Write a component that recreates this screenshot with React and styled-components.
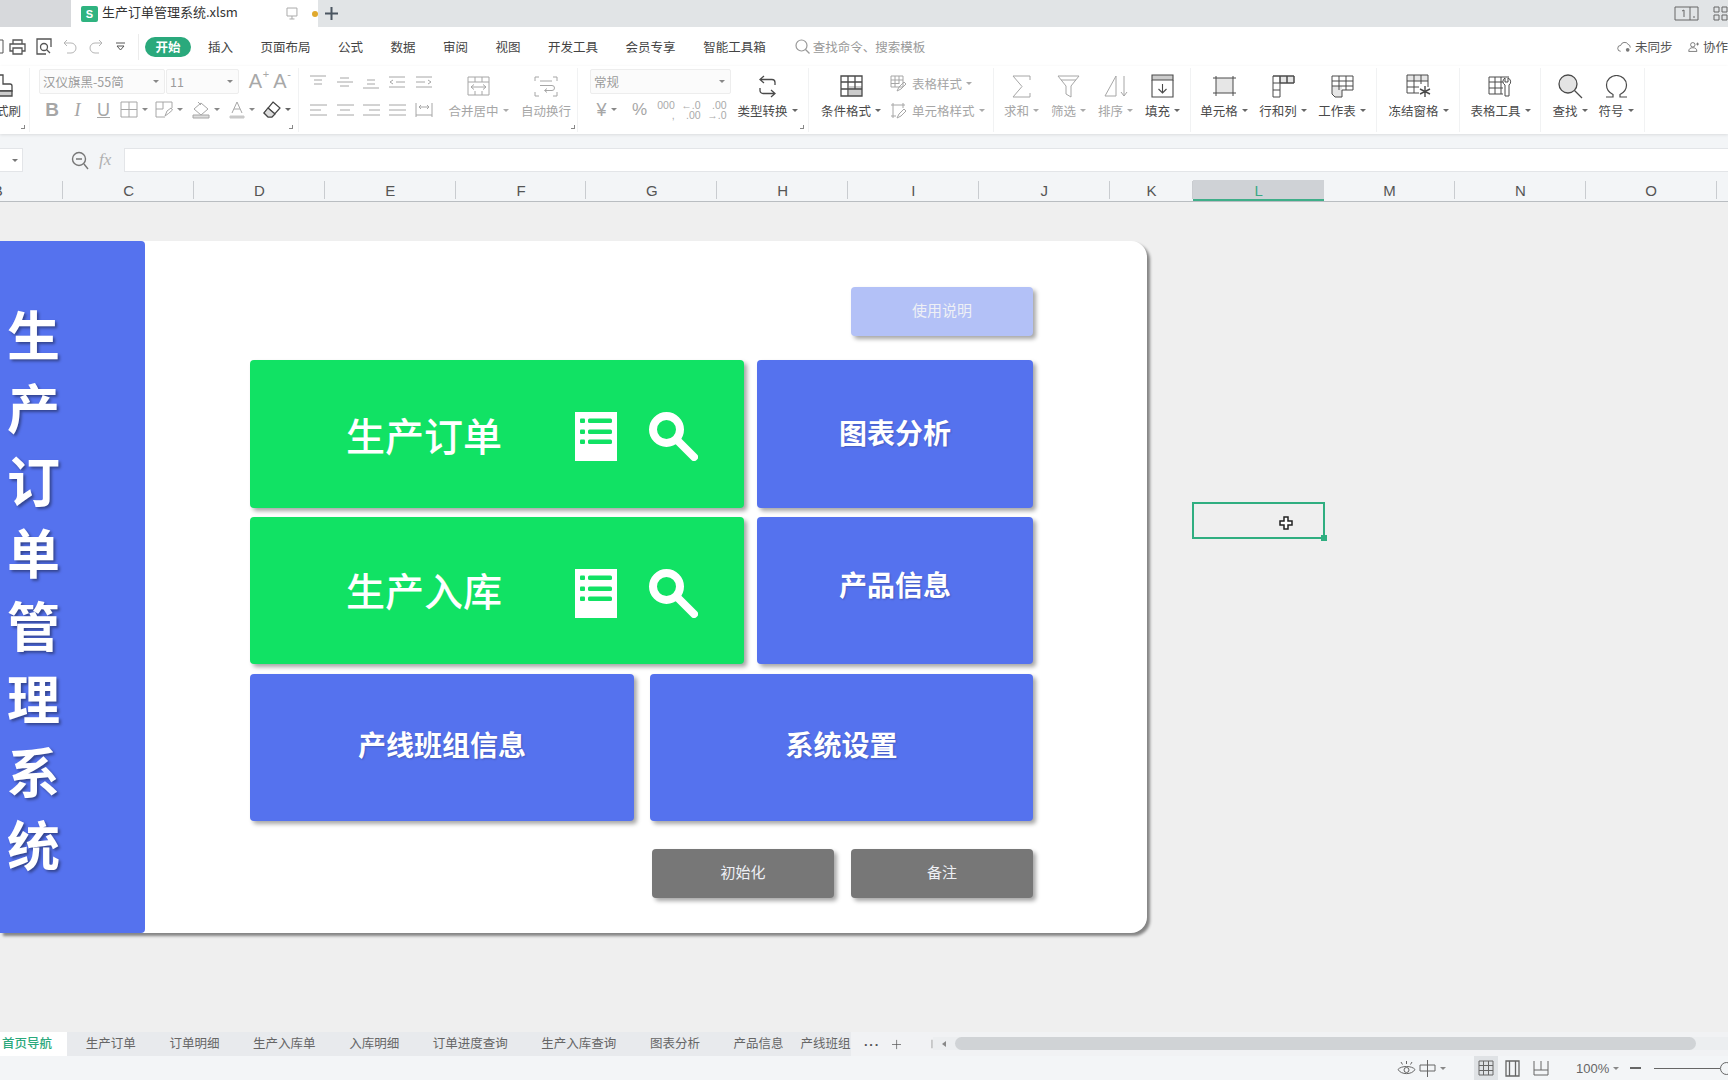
import React from "react";
import styled, { createGlobalStyle } from "styled-components";

const GlobalStyle = createGlobalStyle`
  html, body { margin: 0; padding: 0; background: #efefef; }
  #root { width: 1728px; height: 1080px; overflow: hidden; }
  * { box-sizing: border-box; }
  body { font-family: "Noto Sans CJK SC", "Noto Sans", sans-serif; }
`;

const Page = styled.div`
  display: flex;
  flex-direction: column;
  width: 1728px;
  height: 1080px;
  overflow: hidden;
`;

/* title bar */
const TitleBar = styled.div`
  flex: 0 0 27px;
  display: flex;
  align-items: stretch;
  background: #e1e4e6;
`;
const OtherTab = styled.div`
  width: 71px;
  background: #d7d9dc;
`;
const FileTab = styled.div`
  width: 247px;
  background: #fff;
  display: flex;
  align-items: center;
  padding-left: 10px;
  font-size: 13px;
  color: #333;
`;
const FileBadge = styled.span`
  width: 17px;
  height: 16px;
  margin-right: 4px;
  background: #2fb380;
  color: #fff;
  font: 700 11px "Liberation Sans", sans-serif;
  display: flex;
  align-items: center;
  justify-content: center;
  border-radius: 2px;
`;
const FileName = styled.span`
  width: 185px;
  margin-bottom: 4px;
  white-space: nowrap;
`;
const Dot = styled.i`
  width: 6px;
  height: 6px;
  margin-left: 14px;
  border-radius: 50%;
  background: #e0a92e;
  flex: none;
`;
const NewTab = styled.div`
  width: 45px;
  padding-left: 7px;
  display: flex;
  align-items: center;
  color: #4a5560;
`;
const WinIcons = styled.div`
  margin-left: auto;
  width: 54px;
  display: flex;
  align-items: center;
  gap: 14px;
  color: #666;
`;

/* menu row */
const MenuRow = styled.div`
  flex: 0 0 39px;
  display: flex;
  align-items: center;
  background: #fff;
  font-size: 12.5px;
  color: #444;
`;
const QuickBar = styled.div`
  width: 139px;
  height: 26px;
  margin-right: 6px;
  display: flex;
  align-items: center;
  border-right: 1px solid #ececec;
`;
const QuickSlot = styled.span`
  width: ${(p) => p.$w}px;
  display: flex;
  justify-content: center;
  color: ${(p) => (p.$dim ? "#b5b5b5" : "#555")};
`;
const StartPill = styled.div`
  width: 46px;
  height: 20px;
  margin-right: 17px;
  border-radius: 10px;
  background: #2aa97c;
  color: #fff;
  font-weight: 700;
  display: flex;
  align-items: center;
  justify-content: center;
`;
const MenuItems = styled.div`
  display: flex;
  gap: 27.5px;
`;
const SearchHint = styled.div`
  margin-left: 29px;
  display: flex;
  align-items: center;
  gap: 3px;
  color: #999;
`;
const RightLinks = styled.div`
  margin-left: auto;
  width: 111px;
  display: flex;
  align-items: center;
  gap: 4px;
  white-space: nowrap;
  overflow: hidden;
  color: #555;
`;
const LinkGap = styled.span`
  width: 10px;
`;

/* ribbon */
const Ribbon = styled.div`
  flex: 0 0 68px;
  display: flex;
  background: #fff;
  box-shadow: 0 1px 3px rgba(0, 0, 0, 0.1);
  position: relative;
  z-index: 1;
  font-size: 12.5px;
  color: #a2a2a2;
`;
const Group = styled.div`
  position: relative;
  flex: 0 0 ${(p) => p.$w}px;
  display: flex;
  padding-left: ${(p) => p.$pl || 0}px;
  &::after {
    content: "";
    position: absolute;
    right: 0;
    top: 2px;
    bottom: 2px;
    width: 1px;
    background: #f1f2f3;
  }
`;
const Corner = styled.i`
  position: absolute;
  right: ${(p) => p.$r}px;
  bottom: 5px;
  width: 4px;
  height: 4px;
  border-right: 1px solid #888;
  border-bottom: 1px solid #888;
`;
const Tool = styled.div`
  flex: 0 0 ${(p) => p.$w}px;
  margin-left: ${(p) => p.$ml || 0}px;
  padding-top: 8px;
  display: flex;
  flex-direction: column;
  align-items: center;
  color: ${(p) => (p.$dark ? "#4a4a4a" : "#a6a6a6")};
`;
const ToolIcon = styled.div`
  height: 24px;
  display: flex;
  align-items: center;
  justify-content: center;
`;
const ToolLabel = styled.div`
  height: 24px;
  display: flex;
  align-items: center;
  white-space: nowrap;
`;
const Caret = styled.i`
  width: 0;
  height: 0;
  margin-left: 4px;
  border: 3px solid transparent;
  border-top: 3px solid ${(p) => p.$c || "#888"};
  border-bottom: 0;
  flex: none;
`;
const Stack = styled.div`
  flex: 0 0 ${(p) => p.$w}px;
  padding-top: 3px;
  display: flex;
  flex-direction: column;
  gap: 3px;
`;
const Row = styled.div`
  height: 25px;
  display: flex;
  align-items: center;
`;
const Select = styled.div`
  width: ${(p) => p.$w}px;
  height: 25px;
  margin-right: 1px;
  padding: 0 5px 0 3px;
  background: #fbfbfb;
  border: 1px solid #ededed;
  border-radius: 2px;
  display: flex;
  align-items: center;
  justify-content: space-between;
  white-space: nowrap;
  color: #9c9c9c;
`;
const Slot = styled.div`
  flex: 0 0 ${(p) => p.$w}px;
  display: flex;
  align-items: center;
  justify-content: center;
  color: ${(p) => (p.$dark ? "#444" : "#a6a6a6")};
`;
const StyleGlyph = styled.span`
  font: ${(p) => p.$font};
  text-decoration: ${(p) => (p.$u ? "underline" : "none")};
  line-height: 1;
`;
const GrowA = styled.span`
  font: 400 20px "Liberation Sans", sans-serif;
  position: relative;
  color: #a8a8a8;
  & > sup {
    position: absolute;
    left: 14px;
    top: -2px;
    font-size: 11px;
  }
`;
const Decimal = styled.span`
  display: flex;
  flex-direction: column;
  align-items: flex-end;
  font: 400 10.5px/10px "Liberation Sans", sans-serif;
  color: #aaa;
`;
const SmallLine = styled.div`
  height: 24px;
  display: flex;
  align-items: center;
  gap: 6px;
  white-space: nowrap;
  color: #a6a6a6;
`;
const SmallStack = styled.div`
  padding-top: 5px;
  display: flex;
  flex-direction: column;
  gap: 3px;
`;

/* formula bar + column header */
const FormulaBar = styled.div`
  flex: 0 0 38px;
  padding-top: 14px;
  display: flex;
  background: #f3f5f7;
`;
const NameBox = styled.div`
  width: 23px;
  background: #fff;
  border: 1px solid #e3e5e8;
  border-left: 0;
  padding-right: 4px;
  display: flex;
  align-items: center;
  justify-content: flex-end;
`;
const FxIcons = styled.div`
  width: 101px;
  padding-left: 48px;
  display: flex;
  align-items: center;
  gap: 10px;
  color: #777;
`;
const Fx = styled.span`
  font: italic 400 17px "Liberation Serif", serif;
  color: #b0b0b0;
`;
const FormulaInput = styled.div`
  flex: 1;
  background: #fff;
  border: 1px solid #e3e5e8;
  border-right: 0;
`;
const ColumnHeader = styled.div`
  flex: 0 0 30px;
  display: flex;
  margin-left: -67.6px;
  width: 1900px;
  background: #f3f5f7;
  border-bottom: 1px solid #b9bdc1;
`;
const ColCell = styled.div`
  flex: 0 0 ${(p) => p.$w}px;
  margin-top: 8px;
  padding-top: 2px;
  display: flex;
  align-items: center;
  justify-content: center;
  font: 400 15px "Liberation Sans", sans-serif;
  color: ${(p) => (p.$on ? "#3aa985" : "#555")};
  background: ${(p) =>
    p.$on ? "#cfd2d6" : "linear-gradient(#c9ccd0, #c9ccd0) right bottom / 1px 18px no-repeat"};
  border-bottom: 2px solid ${(p) => (p.$on ? "#3fae89" : "transparent")};
`;

/* sheet */
const Sheet = styled.div`
  flex: 1;
  position: relative;
  padding-top: 39px;
  background: #efefef;
`;
const Panel = styled.div`
  width: 1147px;
  height: 692px;
  display: flex;
  background: #fff;
  border-radius: 0 16px 16px 0;
  box-shadow: 3px 3px 3px rgba(0, 0, 0, 0.45);
`;
const Sidebar = styled.div`
  flex: 0 0 145px;
  padding: 56px 0 0 7px;
  background: #5572ee;
  border-radius: 0 4px 4px 0;
  display: flex;
  flex-direction: column;
  color: #fff;
  font-size: 53px;
  font-weight: 700;
  line-height: 72.8px;
  text-shadow: 2px 2px 3px rgba(0, 0, 0, 0.4);
`;
const Board = styled.div`
  flex: 0 0 783px;
  margin-left: 105px;
  padding-top: 46px;
  display: flex;
  flex-direction: column;
  color: #fff;
`;
const BoardRow = styled.div`
  display: flex;
  justify-content: ${(p) => (p.$end ? "flex-end" : "flex-start")};
  gap: ${(p) => p.$gap || 0}px;
  margin-bottom: ${(p) => p.$mb || 0}px;
`;
const Tile = styled.div`
  flex: 0 0 ${(p) => p.$w}px;
  height: ${(p) => p.$h || 147}px;
  padding-bottom: ${(p) => p.$up || 0}px;
  border-radius: 4px;
  background: ${(p) => (p.$green ? "#11e264" : "#5572ee")};
  box-shadow: 3px 3px 4px rgba(0, 0, 0, 0.35);
  display: flex;
  align-items: center;
  justify-content: center;
  font-size: 28px;
  font-weight: 700;
  text-shadow: 1px 1px 2px rgba(0, 0, 0, 0.2);
`;
const GreenTile = styled(Tile)`
  justify-content: flex-start;
  padding-left: 96px;
  padding-top: 5px;
  font-size: 39px;
  font-weight: 500;
  text-shadow: none;
`;
const GreenLabel = styled.span`
  width: 229px;
  margin-bottom: ${(p) => p.$up}px;
`;
const SearchGlyph = styled.svg`
  margin-left: 32px;
`;
const SmallButton = styled.div`
  flex: 0 0 182px;
  height: 49px;
  padding-bottom: 4px;
  border-radius: 4px;
  background: ${(p) => (p.$light ? "#b3c1f7" : "#777")};
  color: #eef0f5;
  box-shadow: 3px 3px 4px rgba(0, 0, 0, 0.35);
  display: flex;
  align-items: center;
  justify-content: center;
  font-size: 15px;
`;
const SelectedCell = styled.div`
  position: absolute;
  left: 1192px;
  top: 300px;
  width: 133px;
  height: 37px;
  border: 2.5px solid #2fae80;
  &::after {
    content: "";
    position: absolute;
    right: -4px;
    bottom: -4px;
    width: 6px;
    height: 6px;
    background: #2fae80;
  }
`;
const CellCursor = styled.svg`
  position: absolute;
  left: 1279px;
  top: 314px;
`;

/* sheet tabs */
const TabsBar = styled.div`
  flex: 0 0 24px;
  display: flex;
  align-items: stretch;
  background: #f1f2f4;
  font-size: 12.5px;
  color: #666;
`;
const TabStrip = styled.div`
  width: 851px;
  display: flex;
  align-items: center;
  overflow: hidden;
  background: #e8eaed;
  white-space: nowrap;
`;
const HomeTab = styled.div`
  flex: 0 0 67px;
  height: 100%;
  padding: 0 0 4px 2px;
  background: #fff;
  color: #2aa97c;
  font-weight: 500;
  display: flex;
  align-items: center;
`;
const SheetTab = styled.div`
  flex: none;
  padding: 0 ${(p) => (p.$tight ? 0 : 16.8)}px;
  margin-left: ${(p) => (p.$first ? 2 : 0)}px;
  margin-bottom: 4px;
`;
const TabTools = styled.div`
  width: 82px;
  padding-left: 13px;
  display: flex;
  align-items: center;
  gap: 12px;
  color: #555;
`;
const More = styled.span`
  font: 700 13px "Liberation Sans", sans-serif;
  letter-spacing: 1px;
`;
const ToolGap = styled.span`
  width: 8px;
`;
const ScrollArea = styled.div`
  flex: 1;
  margin: 5px 0 6px;
  display: flex;
  align-items: center;
  background: #eceef0;
`;
const ScrollArrow = styled.div`
  width: 22px;
  display: flex;
  justify-content: center;
  &::before {
    content: "";
    border: 3px solid transparent;
    border-right: 4px solid #888;
    border-left: 0;
  }
`;
const ScrollThumb = styled.div`
  width: 741px;
  height: 13px;
  border-radius: 7px;
  background: #d0d3d6;
`;

/* status bar */
const StatusBar = styled.div`
  flex: 0 0 24px;
  padding-left: 1396px;
  display: flex;
  align-items: center;
  background: #f3f5f7;
  font: 400 13px "Liberation Sans", sans-serif;
  color: #666;
`;
const StatusSlot = styled.div`
  flex: 0 0 ${(p) => p.$w}px;
  height: 100%;
  display: flex;
  align-items: center;
  justify-content: center;
  background: ${(p) => (p.$on ? "#dfe2e5" : "transparent")};
`;
const SliderLine = styled.div`
  flex: 0 0 66px;
  height: 1px;
  margin-left: 2px;
  background: #666;
`;
const SliderKnob = styled.div`
  flex: none;
  width: 13px;
  height: 13px;
  border: 1px solid #666;
  border-radius: 50%;
`;

const Ico = ({ w, h, sw = 1, children }) => (
  <svg width={w} height={h} viewBox={`0 0 ${w} ${h}`} fill="none" stroke="currentColor" strokeWidth={sw}>
    {children}
  </svg>
);

const alignRows = [
  ["M1 2h16", "M5 6h8", "M5 10h8"],
  ["M4 4h9", "M1 8h16", "M4 12h9"],
  ["M5 6h8", "M5 10h8", "M1 14h16"],
  ["M1 3h16", "M8 8h9", "M1 13h16", "M5 6L2 8l3 2"],
  ["M1 3h16", "M1 8h9", "M1 13h16", "M13 6l3 2-3 2"],
  ["M1 3h17", "M1 8h11", "M1 13h17"],
  ["M1 3h17", "M4 8h10", "M1 13h17"],
  ["M1 3h17", "M7 8h11", "M1 13h17"],
  ["M1 3h17", "M1 8h17", "M1 13h17"],
  ["M1 1v14", "M17 1v14", "M1 13h16", "M4 5h10", "M6 3L4 5l2 2", "M12 3l2 2-2 2"],
];
const AlignIcon = ({ i }) => (
  <Ico w={18} h={16}>
    {alignRows[i].map((d) => (
      <path key={d} d={d} />
    ))}
  </Ico>
);

const BrushIcon = () => (
  <Ico w={22} h={24} sw={1.3}>
    <path d="M7 1h5v9h7a2 2 0 0 1 2 2v5H1v-5a2 2 0 0 1 2-2h4z" />
    <path d="M1 17h20v5H1z" fill="#ccc" />
  </Ico>
);
const MergeIcon = () => (
  <Ico w={23} h={20}>
    <path d="M1 1h21v18H1z M1 6h21 M8 1v5 M15 1v5 M8 15v4 M15 15v4 M4 11h15 M7 8.5L4 11l3 2.5 M16 8.5l3 2.5-3 2.5" />
  </Ico>
);
const WrapIcon = () => (
  <Ico w={24} h={21}>
    <path d="M1 5V1h4 M19 1h4v4 M1 16v4h4 M19 20h4v-4 M6 5h12 M6 9.5h12a2.5 2.5 0 0 1 0 5h-7 M13 12.5l-2.5 2 2.5 2" />
  </Ico>
);
const SwapIcon = () => (
  <Ico w={19} h={23} sw={1.3}>
    <path d="M6 1L2 4.5 6 8 M2 4.5h12a3 3 0 0 1 3 3V10 M13 15l4 3.5-4 3.5 M17 18.5H5a3 3 0 0 1-3-3V13" />
  </Ico>
);
const CondIcon = () => (
  <Ico w={23} h={22} sw={1.3}>
    <path d="M9 11h13v10H9z" fill="#ccc" stroke="none" />
    <path d="M1 1h21v20H1z M1 7h21 M1 14h21 M8 1v20 M15 1v13" />
  </Ico>
);
const TableStyleIcon = () => (
  <Ico w={16} h={17}>
    <path d="M1 1h12v11H1z M1 5h12 M1 8.5h8 M5 1v11 M9 1v8 M7 16l2-4 5-5 2 2-5 5z" />
  </Ico>
);
const CellStyleIcon = () => (
  <Ico w={16} h={17}>
    <path d="M3 1v15 M13 1v5 M1 3h14 M1 14h5 M7 16l2-4 5-5 2 2-5 5z" />
  </Ico>
);
const SumIcon = () => (
  <Ico w={19} h={23}>
    <path d="M18 5V1H1l9 10.5L1 22h17v-4" />
  </Ico>
);
const FilterIcon = () => (
  <Ico w={23} h={23}>
    <path d="M1 1h21l-8 10v11l-5-3v-8z M4 5h15" />
  </Ico>
);
const SortIcon = () => (
  <Ico w={24} h={23}>
    <path d="M1 21L12 1v20z M20 1v20 M17 17l3 4 3-4" />
  </Ico>
);
const FillIcon = () => (
  <Ico w={23} h={24} sw={1.1}>
    <path d="M1 1h21v5H1z" fill="#ccc" />
    <path d="M1 6v17h21V6 M11.5 10v9 M7.5 15l4 4 4-4" />
  </Ico>
);
const CellIcon = () => (
  <Ico w={25} h={22}>
    <path d="M4 3h17v15H4z" fill="#e6e6e6" stroke="none" />
    <path d="M4 1v20 M21 1v20 M1 3h23 M1 18h23" />
  </Ico>
);
const RowColIcon = () => (
  <Ico w={24} h={23}>
    <path d="M16 1h7v7h-7z M9 1h7v7H9z" fill="#e6e6e6" />
    <path d="M2 1h7v21H2z M2 8h7 M2 15h7 M2 1h21v7H9" />
  </Ico>
);
const SheetIcon = () => (
  <Ico w={24} h={23}>
    <path d="M2 11h10v11H5l-3-3z" fill="#e6e6e6" stroke="none" />
    <path d="M2 1h21v14H12v7H5l-3-3z M2 6h21 M2 11h21 M9 1v14 M16 1v14" />
  </Ico>
);
const FreezeIcon = () => (
  <Ico w={25} h={24}>
    <path d="M1 1h21v6H1z" fill="#e6e6e6" stroke="none" />
    <path d="M13 19H1V1h21v12 M1 7h21 M1 13h12 M8 1v18 M15 1v9" />
    <path d="M19 12v11 M14 15l10 5 M14 20l10-5" strokeWidth="1.4" />
  </Ico>
);
const ToolsIcon = () => (
  <Ico w={25} h={24}>
    <path d="M15 20H1V3h20 M1 8h14 M1 14h14 M7 3v17 M13 3v17" />
    <path d="M17 4v4h3V4a4 4 0 0 1 1 7v11h-4V11a4 4 0 0 1 0-7z" />
  </Ico>
);
const FindIcon = () => (
  <Ico w={25} h={25} sw={1.3}>
    <circle cx="10" cy="10" r="9" fill="#e4e4e4" />
    <path d="M16.5 16.5L24 24" />
  </Ico>
);
const OmegaIcon = () => (
  <Ico w={23} h={23} sw={1.2}>
    <path d="M1 22h7v-2.5C4 17.5 1.5 14 1.5 10a10 9.5 0 0 1 20 0c0 4-2.5 7.5-6.5 9.5V22h7" />
  </Ico>
);
const BorderIcon = () => (
  <Ico w={18} h={17}>
    <path d="M1 1h16v15H1z M9 1v15 M1 8.5h16" />
  </Ico>
);
const ShadeIcon = () => (
  <Ico w={18} h={17}>
    <path d="M1 1h16v6 M1 1v15h9 M1 8h7 M8 1v7 M10 15l2-5 4-3 1.5 2-4 3.5z" />
  </Ico>
);
const PaintIcon = () => (
  <Ico w={18} h={18}>
    <path d="M9 2l7 6-7 6-7-6z M6 1l3 3" />
    <path d="M1 14h16v3H1z" fill="#ddd" />
  </Ico>
);
const FontColorIcon = () => (
  <Ico w={16} h={18}>
    <path d="M3 12L8 1l5 11 M5 8h6" />
    <path d="M1 15h14v2H1z" fill="currentColor" opacity="0.6" />
  </Ico>
);
const EraserIcon = () => (
  <Ico w={18} h={17} sw={1.2}>
    <path d="M10 1l7 6-8 9H5l-4-4z M5 7l7 6" />
    <path d="M1 12l4-5 7 6-3 3H5z" fill="#ddd" />
  </Ico>
);
const DocIcon = () => (
  <svg width="42" height="49" viewBox="0 0 42 49">
    <path d="M0 0h42v49H0z" fill="#fff" />
    {[9, 20, 30].map((y) => (
      <g key={y} fill="#11e264">
        <rect x="5" y={y - 2.5} width="5" height="4.5" rx="1" />
        <rect x="13" y={y - 2.5} width="24" height="4.5" rx="1.5" />
      </g>
    ))}
  </svg>
);
const LensIcon = () => (
  <SearchGlyph width="49" height="49" viewBox="0 0 49 49" fill="none" stroke="#fff" strokeWidth="8">
    <circle cx="17.5" cy="17.5" r="13.5" />
    <path d="M29 29l16 16" strokeLinecap="round" />
  </SearchGlyph>
);

const menus = ["插入", "页面布局", "公式", "数据", "审阅", "视图", "开发工具", "会员专享", "智能工具箱"];
const columns = ["B", "C", "D", "E", "F", "G", "H", "I", "J", "K", "L", "M", "N", "O", "P"];
const sheets = ["订单明细", "生产入库单", "入库明细", "订单进度查询", "生产入库查询", "图表分析", "产品信息"];
const title = "生产订单管理系统".split("");

const Labeled = ({ text, dark }) => (
  <ToolLabel>
    {text}
    <Caret $c={dark ? "#666" : "#aaa"} />
  </ToolLabel>
);

const BigTool = ({ w, text, dark, ml, icon, plain }) => (
  <Tool $w={w} $dark={dark} $ml={ml}>
    <ToolIcon>{icon}</ToolIcon>
    {plain ? <ToolLabel>{text}</ToolLabel> : <Labeled text={text} dark={dark} />}
  </Tool>
);

export default function App() {
  return (
    <Page>
      <GlobalStyle />
      <TitleBar>
        <OtherTab />
        <FileTab>
          <FileBadge>S</FileBadge>
          <FileName>生产订单管理系统.xlsm</FileName>
          <Ico w={12} h={13}>
            <path d="M1 1h10v8H1z M6 9v3 M3.5 12h5" stroke="#aaa" />
          </Ico>
          <Dot />
        </FileTab>
        <NewTab>
          <Ico w={13} h={13} sw={2}>
            <path d="M6.5 0v13 M0 6.5h13" />
          </Ico>
        </NewTab>
        <WinIcons>
          <Ico w={25} h={15}>
            <path d="M1 1h23v13H1z M16 1v13 M8 5l2-1v7 M19 11h2" />
          </Ico>
          <Ico w={15} h={15}>
            <path d="M1 1h5v5H1z M9 1h5v5H9z M1 9h5v5H1z M9 9h5v5H9z" />
          </Ico>
        </WinIcons>
      </TitleBar>

      <MenuRow>
        <QuickBar>
          <QuickSlot $w={4}>
            <Ico w={4} h={15}>
              <path d="M0 1h3v13H0" />
            </Ico>
          </QuickSlot>
          <QuickSlot $w={27}>
            <Ico w={17} h={16} sw={1.3}>
              <path d="M4 5V1h9v4 M4 12H1V5h15v7h-3 M4 9h9v6H4z" />
            </Ico>
          </QuickSlot>
          <QuickSlot $w={25}>
            <Ico w={16} h={17} sw={1.3}>
              <path d="M15 9V1H1v15h9" />
              <circle cx="8" cy="9" r="3.5" />
              <path d="M10.5 11.5L14 15" />
            </Ico>
          </QuickSlot>
          <QuickSlot $w={26} $dim>
            <Ico w={15} h={15}>
              <path d="M5 1L2 4l3 3 M2 4h7a4.5 4.5 0 0 1 0 10H5" />
            </Ico>
          </QuickSlot>
          <QuickSlot $w={28} $dim>
            <Ico w={15} h={15}>
              <path d="M10 1l3 3-3 3 M13 4H6a4.5 4.5 0 0 0 0 10h4" />
            </Ico>
          </QuickSlot>
          <QuickSlot $w={20}>
            <Ico w={9} h={9}>
              <path d="M0 1h9 M1 4l3.5 4L8 4z" />
            </Ico>
          </QuickSlot>
        </QuickBar>
        <StartPill>开始</StartPill>
        <MenuItems>
          {menus.map((m) => (
            <span key={m}>{m}</span>
          ))}
        </MenuItems>
        <SearchHint>
          <Ico w={15} h={15} sw={1.2}>
            <circle cx="6.5" cy="6.5" r="5.5" />
            <path d="M10.5 10.5L14.5 14.5" />
          </Ico>
          查找命令、搜索模板
        </SearchHint>
        <RightLinks>
          <Ico w={19} h={15}>
            <path d="M5 14a4 4 0 0 1 0-8 5.5 5.5 0 0 1 10-1.5A4.5 4.5 0 0 1 18 9" />
            <circle cx="14.5" cy="12" r="2.5" fill="#777" stroke="none" />
          </Ico>
          未同步
          <LinkGap />
          <Ico w={15} h={14}>
            <circle cx="6.5" cy="4" r="3" />
            <path d="M1 13c0-3.5 2-5 5.5-5s5.5 1.5 5.5 5z M11 3h4 M13 1v4" />
          </Ico>
          协作
        </RightLinks>
      </MenuRow>

      <Ribbon>
        <Group $w={30}>
          <BigTool w={46} ml={-20.75} text="格式刷" dark plain icon={<BrushIcon />} />
          <Corner $r={5} />
        </Group>

        <Group $w={269} $pl={9}>
          <Stack $w={255}>
            <Row>
              <Select $w={126}>
                汉仪旗黑-55简
                <Caret />
              </Select>
              <Select $w={73}>
                11
                <Caret />
              </Select>
              <Slot $w={31}>
                <GrowA>
                  A<sup>+</sup>
                </GrowA>
              </Slot>
              <Slot $w={18}>
                <GrowA>
                  A<sup>-</sup>
                </GrowA>
              </Slot>
            </Row>
            <Row>
              <Slot $w={26}>
                <StyleGlyph $font='700 19px "Liberation Sans", sans-serif'>B</StyleGlyph>
              </Slot>
              <Slot $w={25}>
                <StyleGlyph $font='italic 400 19px "Liberation Serif", serif'>I</StyleGlyph>
              </Slot>
              <Slot $w={27}>
                <StyleGlyph $u $font='400 18px "Liberation Sans", sans-serif'>
                  U
                </StyleGlyph>
              </Slot>
              <Slot $w={34}>
                <BorderIcon />
                <Caret />
              </Slot>
              <Slot $w={36}>
                <ShadeIcon />
                <Caret />
              </Slot>
              <Slot $w={38}>
                <PaintIcon />
                <Caret />
              </Slot>
              <Slot $w={34}>
                <FontColorIcon />
                <Caret />
              </Slot>
              <Slot $w={36} $dark>
                <EraserIcon />
                <Caret $c="#666" />
              </Slot>
            </Row>
          </Stack>
          <Corner $r={6} />
        </Group>

        <Group $w={278} $pl={6}>
          <Stack $w={138}>
            <Row>
              {[0, 1, 2, 3, 4].map((i) => (
                <Slot key={i} $w={26.4}>
                  <AlignIcon i={i} />
                </Slot>
              ))}
            </Row>
            <Row>
              {[5, 6, 7, 8, 9].map((i) => (
                <Slot key={i} $w={26.4}>
                  <AlignIcon i={i} />
                </Slot>
              ))}
            </Row>
          </Stack>
          <BigTool w={71} text="合并居中" icon={<MergeIcon />} />
          <BigTool w={64} text="自动换行" plain icon={<WrapIcon />} />
          <Corner $r={3} />
        </Group>

        <Group $w={231} $pl={12}>
          <Stack $w={142}>
            <Row>
              <Select $w={141}>
                常规
                <Caret />
              </Select>
            </Row>
            <Row>
              <Slot $w={33}>
                <StyleGlyph $font='400 18px "Liberation Sans", sans-serif'>¥</StyleGlyph>
                <Caret />
              </Slot>
              <Slot $w={33}>
                <StyleGlyph $font='400 17px "Liberation Sans", sans-serif'>%</StyleGlyph>
              </Slot>
              <Slot $w={20}>
                <Decimal>
                  <span>000</span>
                  <span>,</span>
                </Decimal>
              </Slot>
              <Slot $w={30}>
                <Decimal>
                  <span>←.0</span>
                  <span>.00</span>
                </Decimal>
              </Slot>
              <Slot $w={22}>
                <Decimal>
                  <span>.00</span>
                  <span>→.0</span>
                </Decimal>
              </Slot>
            </Row>
          </Stack>
          <BigTool w={71} text="类型转换" dark icon={<SwapIcon />} />
          <Corner $r={5} />
        </Group>

        <Group $w={185} $pl={3}>
          <BigTool w={78} text="条件格式" dark icon={<CondIcon />} />
          <SmallStack>
            <SmallLine>
              <TableStyleIcon />
              <ToolLabel>
                表格样式
                <Caret $c="#aaa" />
              </ToolLabel>
            </SmallLine>
            <SmallLine>
              <CellStyleIcon />
              <ToolLabel>
                单元格样式
                <Caret $c="#aaa" />
              </ToolLabel>
            </SmallLine>
          </SmallStack>
        </Group>

        <Group $w={197} $pl={4}>
          <BigTool w={47} text="求和" icon={<SumIcon />} />
          <BigTool w={47} text="筛选" icon={<FilterIcon />} />
          <BigTool w={47} text="排序" icon={<SortIcon />} />
          <BigTool w={47} text="填充" dark icon={<FillIcon />} />
        </Group>

        <Group $w={186} $pl={3.5}>
          <BigTool w={59} text="单元格" dark icon={<CellIcon />} />
          <BigTool w={59} text="行和列" dark icon={<RowColIcon />} />
          <BigTool w={59} text="工作表" dark icon={<SheetIcon />} />
        </Group>

        <Group $w={83}>
          <BigTool w={83} text="冻结窗格" dark icon={<FreezeIcon />} />
        </Group>

        <Group $w={81}>
          <BigTool w={81} text="表格工具" dark icon={<ToolsIcon />} />
        </Group>

        <Group $w={104} $pl={6}>
          <BigTool w={46} text="查找" dark icon={<FindIcon />} />
          <BigTool w={46} text="符号" dark icon={<OmegaIcon />} />
        </Group>
      </Ribbon>

      <FormulaBar>
        <NameBox>
          <Caret $c="#777" />
        </NameBox>
        <FxIcons>
          <Ico w={18} h={20} sw={1.4}>
            <circle cx="8" cy="9" r="6.5" />
            <path d="M5 9h6 M13 14l4 5" />
          </Ico>
          <Fx>fx</Fx>
        </FxIcons>
        <FormulaInput />
      </FormulaBar>

      <ColumnHeader>
        {columns.map((c) => (
          <ColCell key={c} $w={c === "K" ? 83.8 : 130.8} $on={c === "L"}>
            {c}
          </ColCell>
        ))}
      </ColumnHeader>

      <Sheet>
        <Panel>
          <Sidebar>
            {title.map((ch, i) => (
              <span key={i}>{ch}</span>
            ))}
          </Sidebar>
          <Board>
            <BoardRow $end $mb={24}>
              <SmallButton $light>使用说明</SmallButton>
            </BoardRow>
            <BoardRow $gap={13} $mb={9}>
              <GreenTile $w={494} $h={148} $green>
                <GreenLabel $up={6}>生产订单</GreenLabel>
                <DocIcon />
                <LensIcon />
              </GreenTile>
              <Tile $w={276} $h={148} $up={4}>
                图表分析
              </Tile>
            </BoardRow>
            <BoardRow $gap={13} $mb={10}>
              <GreenTile $w={494} $green>
                <GreenLabel $up={9}>生产入库</GreenLabel>
                <DocIcon />
                <LensIcon />
              </GreenTile>
              <Tile $w={276} $up={13}>
                产品信息
              </Tile>
            </BoardRow>
            <BoardRow $gap={16} $mb={28}>
              <Tile $w={384} $up={7}>
                产线班组信息
              </Tile>
              <Tile $w={383} $up={7}>
                系统设置
              </Tile>
            </BoardRow>
            <BoardRow $end $gap={17}>
              <SmallButton>初始化</SmallButton>
              <SmallButton>备注</SmallButton>
            </BoardRow>
          </Board>
        </Panel>
        <SelectedCell />
        <CellCursor width="14" height="14" viewBox="0 0 14 14">
          <path d="M5 1h4v4h4v4H9v4H5V9H1V5h4z" fill="#fff" stroke="#222" strokeWidth="1.5" />
        </CellCursor>
      </Sheet>

      <TabsBar>
        <TabStrip>
          <HomeTab>首页导航</HomeTab>
          <SheetTab $first>生产订单</SheetTab>
          {sheets.map((s) => (
            <SheetTab key={s}>{s}</SheetTab>
          ))}
          <SheetTab $tight>产线班组</SheetTab>
        </TabStrip>
        <TabTools>
          <More>···</More>
          <Ico w={13} h={13}>
            <path d="M6.5 0v13 M0 6.5h13" />
          </Ico>
          <ToolGap />
          <Ico w={3} h={12}>
            <path d="M0.5 0v12 M2.5 0v12" stroke="#aaa" />
          </Ico>
        </TabTools>
        <ScrollArea>
          <ScrollArrow />
          <ScrollThumb />
        </ScrollArea>
      </TabsBar>

      <StatusBar>
        <StatusSlot $w={20}>
          <Ico w={19} h={17}>
            <path d="M1 9.5C4 5.5 15 5.5 18 9.5 15 15 4 15 1 9.5z" />
            <circle cx="9.5" cy="10" r="2.5" />
            <path d="M9.5 1v3 M4 2l1.5 2.5 M15 2l-1.5 2.5" />
          </Ico>
        </StatusSlot>
        <StatusSlot $w={33}>
          <Ico w={17} h={17}>
            <path d="M1 5h15v6H1z M8.5 0v17" />
          </Ico>
          <Caret />
        </StatusSlot>
        <StatusSlot $w={25} />
        <StatusSlot $w={24} $on>
          <Ico w={16} h={16}>
            <path d="M1 1h14v14H1z M1 5.5h14 M1 10.5h14 M5.5 1v14 M10.5 1v14" />
          </Ico>
        </StatusSlot>
        <StatusSlot $w={29}>
          <Ico w={15} h={17} sw={1.3}>
            <path d="M1 1h13v15H1z M4.5 1v15 M10.5 1v15" />
          </Ico>
        </StatusSlot>
        <StatusSlot $w={28}>
          <Ico w={16} h={16}>
            <path d="M1 1v14h14V1 M1 10h14 M8 1v9" />
          </Ico>
        </StatusSlot>
        <StatusSlot $w={21} />
        100%
        <Caret />
        <StatusSlot $w={33}>
          <Ico w={11} h={2} sw={2}>
            <path d="M0 1h11" />
          </Ico>
        </StatusSlot>
        <SliderLine />
        <SliderKnob />
      </StatusBar>
    </Page>
  );
}
